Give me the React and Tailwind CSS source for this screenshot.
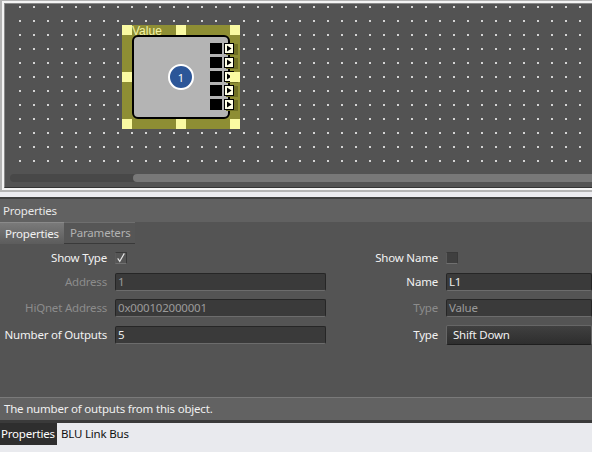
import React from "react";

const font = { fontFamily: '"Noto Sans", "Open Sans", sans-serif' };

function Field({ value, disabled }) {
  return (
    <div
      className={`h-[18px] flex items-center pl-[2px] rounded-[2px] bg-[#3a3a3a] border border-[#262626] border-b-[#6c6c6c] text-[11.5px] tracking-[-0.2px] leading-none whitespace-nowrap ${
        disabled ? "text-[#9a9a9a]" : "text-[#ececec]"
      }`}
    >
      {value}
    </div>
  );
}

function Label({ children, disabled }) {
  return (
    <div
      className={`text-right text-[11.5px] tracking-[-0.2px] leading-none pr-[8px] whitespace-nowrap ${
        disabled ? "text-[#8c8c8c]" : "text-[#f2f2f2]"
      }`}
    >
      {children}
    </div>
  );
}

function Check({ checked }) {
  return (
    <div
      className={`w-[12px] h-[12px] border border-[#393939] border-b-[#707070] border-l-[#5a5a5a] flex items-center justify-center ${
        checked ? "bg-[#555555]" : "bg-[#3f3f3f]"
      }`}
    >
      {checked && (
        <svg width="12" height="12" viewBox="0 0 12 12">
          <path d="M2 6.5 L4.5 10 L10 0.5" fill="none" stroke="#e6e6e6" strokeWidth="1.4" />
        </svg>
      )}
    </div>
  );
}

function Node() {
  const ports = [18, 32, 46, 60, 74];
  const handles = [
    [0, 0],
    [54, 0],
    [108, 0],
    [0, 47],
    [108, 47],
    [0, 94],
    [54, 94],
    [108, 94],
  ];
  return (
    <div className="absolute left-[117px] top-[21px] w-[118px] h-[104px] bg-[#8e8e34]">
      <div className="absolute left-[10px] top-[10px] w-[98px] h-[84px] bg-[#b4b4b4] border-2 border-black rounded-[6px]" />
      {ports.map((y) => (
        <div key={y}>
          <div className="absolute left-[88px] w-[12px] h-[11px] bg-black" style={{ top: y }} />
          <div className="absolute left-[104px] w-[12px] h-[11px] bg-[#6f6f24]" style={{ top: y + 1 }} />
          <div
            className="absolute left-[102px] w-[10px] h-[11px] bg-[#ffffe6] border border-black flex items-center justify-center"
            style={{ top: y }}
          >
            <svg width="6" height="7" viewBox="0 0 6 7">
              <path d="M1 0.5 L5.5 3.5 L1 6.5 Z" fill="#000" />
            </svg>
          </div>
        </div>
      ))}
      {handles.map(([x, y]) => (
        <div key={`${x}-${y}`} className="absolute w-[10px] h-[10px] bg-[#fafaa2]" style={{ left: x, top: y }} />
      ))}
      <div
        className="absolute left-[10px] top-[-1px] text-[12px] leading-[14px] text-[#f3f3a6]"
        style={{ fontFamily: '"Liberation Sans", Arial, sans-serif' }}
      >
        Value
      </div>
      <div className="absolute left-[46px] top-[39px] w-[26px] h-[26px] rounded-full bg-[#2c5698] border-2 border-white flex items-center justify-center text-white text-[11px] leading-none">
        1
      </div>
    </div>
  );
}

export default function App() {
  return (
    <div className="w-[592px] h-[452px] overflow-hidden flex flex-col bg-[#545454]" style={font}>
      {/* CANVAS */}
      <div className="h-[192px] shrink-0 bg-[#b4b4b4] pt-px pl-[2px] pb-[2px]">
        <div className="h-full border-t-2 border-l-2 border-b-2 border-[#f4f4f4]">
          <div className="h-full border-t border-l border-b border-t-[#8a8a8a] border-l-[#8a8a8a] border-b-[#333333] bg-[#535353] relative overflow-hidden flex flex-col justify-end">
            <svg className="absolute left-[14px] top-[2px]" width="600" height="190">
              <defs>
                <pattern id="dots" width="14" height="14" patternUnits="userSpaceOnUse">
                  <rect x="0" y="0" width="2" height="2" fill="#d4d4d4" />
                </pattern>
              </defs>
              <rect width="600" height="190" fill="url(#dots)" />
            </svg>
            <Node />
            <div className="relative ml-[5px] mb-[5px] h-[8px] rounded-l-full bg-[#484848] flex">
              <div className="ml-[123px] flex-1 rounded-l-full bg-[#787878]" />
            </div>
          </div>
        </div>
      </div>
      <div className="h-[5px] shrink-0 bg-[#ececf0]" />
      <div className="h-[2px] shrink-0 bg-[#404040]" />

      {/* HEADER */}
      <div className="h-[23px] shrink-0 bg-[#616161] flex items-center pl-[3px] text-[11.5px] tracking-[-0.2px] text-[#e8e8e8]">
        Properties
      </div>

      {/* TABS */}
      <div className="h-[22px] shrink-0 flex text-[11.5px] tracking-[-0.2px] leading-none">
        <div className="w-[64px] flex items-center pl-[5px] text-[#f2f2f2] bg-gradient-to-b from-[#7a7a7a] to-[#5c5c5c] border-t border-[#8a8a8a]">
          Properties
        </div>
        <div className="w-[71px] flex items-center pl-[6px] text-[#b2b2b2] bg-[#565656] border-t border-[#6e6e6e] border-b border-b-[#3a3a3a]">
          Parameters
        </div>
      </div>

      {/* BODY */}
      <div className="flex-1 pt-[2px]">
        <div className="grid grid-cols-[115px_211px_120px_1fr] grid-rows-[23px_26px_26px_27px] items-center">
          <Label>Show Type</Label>
          <Check checked />
          <Label>Show Name</Label>
          <Check />

          <Label disabled>Address</Label>
          <Field value="1" disabled />
          <Label>Name</Label>
          <Field value="L1" />

          <Label disabled>HiQnet Address</Label>
          <Field value="0x000102000001" disabled />
          <Label disabled>Type</Label>
          <Field value="Value" disabled />

          <Label>Number of Outputs</Label>
          <Field value="5" />
          <Label>Type</Label>
          <div className="h-[20px] flex items-center pl-[6px] rounded-[2px] bg-gradient-to-b from-[#404040] to-[#2e2e2e] border border-[#666666] border-b-[#1e1e1e] text-[11.5px] tracking-[-0.2px] leading-none text-[#f0f0f0]">
            Shift Down
          </div>
        </div>
      </div>

      {/* DESCRIPTION */}
      <div className="h-[23px] shrink-0 bg-[#626262] border-t border-[#7a7a7a] flex items-center pl-[4px] text-[11.5px] tracking-[-0.2px] text-[#f0f0f0]">
        The number of outputs from this object.
      </div>
      <div className="h-[3px] shrink-0 bg-[#3a3a3a]" />

      {/* BOTTOM TABS */}
      <div className="h-[29px] shrink-0 bg-[#e9eaee] flex items-start text-[11.5px] tracking-[-0.2px] leading-none">
        <div className="h-[22px] w-[57px] bg-[#2e2e2e] text-white flex items-center pl-[1px] whitespace-nowrap">Properties</div>
        <div className="h-[22px] flex items-center pl-[4px] text-[#111111]">BLU Link Bus</div>
      </div>
    </div>
  );
}
